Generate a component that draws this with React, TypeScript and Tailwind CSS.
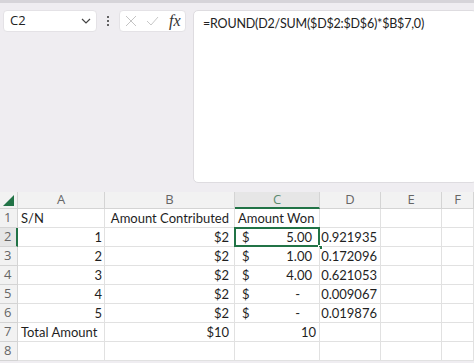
import React from 'react';

const cols = ['A', 'B', 'C', 'D', 'E', 'F'];

type Row = {
  n: number;
  a?: string;
  aRight?: boolean;
  b?: string;
  c?: string;
  cDollar?: boolean;
  cLeft?: boolean;
  d?: string;
};

const rows: Row[] = [
  { n: 1, a: 'S/N', b: 'Amount Contributed', c: 'Amount Won', cLeft: true },
  { n: 2, a: '1', aRight: true, b: '$2', c: '5.00', cDollar: true, d: '0.921935' },
  { n: 3, a: '2', aRight: true, b: '$2', c: '1.00', cDollar: true, d: '0.172096' },
  { n: 4, a: '3', aRight: true, b: '$2', c: '4.00', cDollar: true, d: '0.621053' },
  { n: 5, a: '4', aRight: true, b: '$2', c: '-', cDollar: true, d: '0.009067' },
  { n: 6, a: '5', aRight: true, b: '$2', c: '-', cDollar: true, d: '0.019876' },
  { n: 7, a: 'Total Amount', b: '$10', c: '10' },
  { n: 8 },
];

const cell = 'h-[19px] border-r border-b border-[#e1e1e1] flex items-end pb-[1px] text-[13px] leading-[16px] text-[#1f1f1f] whitespace-nowrap overflow-visible';

export default function App() {
  return (
    <div className="w-[474px] h-[363px] overflow-hidden bg-[#efedf1] font-['Lato',sans-serif]">
      <div className="h-[3px] bg-[#d6d4d9]" />
      <div className="flex items-start px-[3px] pt-[7px] h-[180px]">
        <div className="w-[94px] h-[22px] bg-white rounded-[4px] border border-[#e4e2e6] flex items-center justify-between pl-[6px] pr-[5px] font-['Open_Sans',sans-serif] text-[13px] text-[#222]">
          <span>C2</span>
          <svg width="10" height="6" viewBox="0 0 10 6" fill="none" stroke="#444" strokeWidth="1.2">
            <path d="M1 1l4 4 4-4" />
          </svg>
        </div>
        <div className="w-[22px] h-[22px] flex flex-col items-center justify-center gap-[2px]">
          <span className="w-[2px] h-[2px] bg-[#333] rounded-full" />
          <span className="w-[2px] h-[2px] bg-[#333] rounded-full" />
          <span className="w-[2px] h-[2px] bg-[#333] rounded-full" />
        </div>
        <div className="w-[67px] h-[22px] bg-white rounded-[4px] border border-[#e4e2e6] flex items-center pl-[5px] pr-[4px] gap-[9px]">
          <svg width="12" height="12" viewBox="0 0 12 12" fill="none" stroke="#c4c4c4" strokeWidth="1">
            <path d="M1 1l10 10M11 1L1 11" />
          </svg>
          <svg width="13" height="10" viewBox="0 0 13 10" fill="none" stroke="#c8c8c8" strokeWidth="1">
            <path d="M1 5l4 4 7-8" />
          </svg>
          <span className="font-['Liberation_Serif',serif] italic text-[16px] leading-none text-[#333] ml-[1px]">fx</span>
        </div>
        <div className="ml-[7px] flex-1 h-[173px] bg-white rounded-[5px] border border-[#dedce0] pl-[9px] pt-[4px] font-['Lato',sans-serif] text-[12.5px] tracking-[-0.2px] text-[#222] mr-[-6px]">
          =ROUND(D2/SUM($D$2:$D$6)*$B$7,0)
        </div>
      </div>
      <div className="h-[9px]" />
      <div className="grid grid-cols-[18px_87px_130px_85px_61px_61px_1fr] bg-white">
        <div className="h-[17px] bg-[#f2f2f2] border-r border-b border-[#d4d4d4] relative">
          <svg className="absolute right-[3px] bottom-[2px]" width="11" height="11" viewBox="0 0 11 11">
            <path d="M11 0V11H0Z" fill="#217346" />
          </svg>
        </div>
        {cols.map((c) => (
          <div
            key={c}
            className={
              c === 'C'
                ? "h-[17px] bg-[#e6e6e6] border-r border-[#d4d4d4] border-b-2 border-b-[#217346] flex items-center justify-center text-[13px] text-[#5b8a6e] font-['Open_Sans',sans-serif]"
                : "h-[17px] bg-[#f2f2f2] border-r border-b border-[#d4d4d4] flex items-center justify-center text-[13px] text-[#666] font-['Open_Sans',sans-serif]"
            }
          >
            {c}
          </div>
        ))}
        {rows.map((r) => (
          <React.Fragment key={r.n}>
            <div
              className={
                r.n === 2
                  ? "h-[19px] bg-[#e6e6e6] border-r-2 border-r-[#217346] border-b border-[#d4d4d4] flex items-center pl-[4px] text-[13px] text-[#666] font-['Open_Sans',sans-serif]"
                  : "h-[19px] bg-[#f2f2f2] border-r border-b border-[#d4d4d4] flex items-center pl-[4px] text-[13px] text-[#666] font-['Open_Sans',sans-serif]"
              }
            >
              {r.n}
            </div>
            <div className={`${cell} ${r.aRight ? 'justify-end pr-[2px]' : 'pl-[3px]'}`}>{r.a}</div>
            <div className={`${cell} justify-end pr-[5px]`}>{r.b}</div>
            <div className={`${cell} relative ${r.cLeft ? 'pl-[3px]' : r.cDollar ? 'justify-between pl-[7px] pr-[7px]' : 'justify-end pr-[3px]'}`}>
              {r.cDollar && <span>$</span>}
              <span className={r.c === '-' ? 'pr-[12px]' : ''}>{r.c}</span>
              {r.n === 2 && (
                <>
                  <span className="absolute left-[-1px] top-[-1px] right-[-1px] bottom-[-1px] border-2 border-[#217346]" />
                  <span className="absolute right-[-4px] bottom-[-4px] w-[5px] h-[5px] bg-[#217346] border border-white" />
                </>
              )}
            </div>
            <div className={`${cell} justify-end pr-[3px]`}>{r.d}</div>
            <div className={cell} />
            <div className={cell} />
          </React.Fragment>
        ))}
      </div>
    </div>
  );
}
